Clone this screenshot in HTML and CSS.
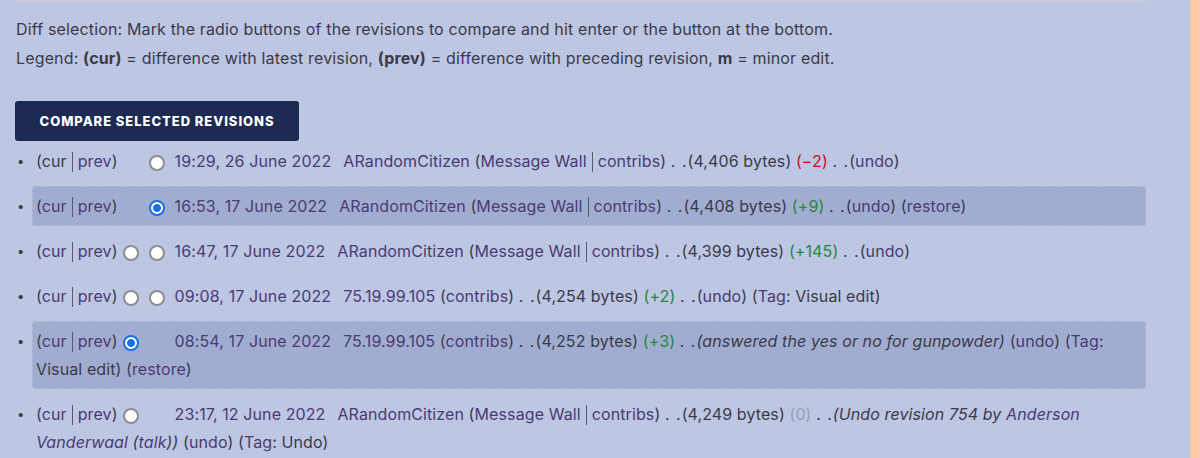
FILE: index.html
```html
<!DOCTYPE html>
<html>
<head>
<meta charset="utf-8">
<link rel="stylesheet" href="styles.css">
</head>
<body>
<div class="page">
  <div class="main">
    <div class="topline"></div>
    <p class="legend">Diff selection: Mark the radio buttons of the revisions to compare and hit enter or the button at the bottom.<br>Legend: <b>(cur)</b> = difference with latest revision, <b>(prev)</b> = difference with preceding revision, <b>m</b> = minor edit.</p>
    <button class="compare">COMPARE SELECTED REVISIONS</button>
    <ul class="history">
      <li class="row"><span class="bullet">•</span><div class="entry"><span class="curprev">(cur<span class="sep"></span><a>prev</a>)</span><span class="radio off hide"></span><span class="radio off"></span><a class="date">19:29, 26 June 2022</a><span class="user"><a>ARandomCitizen</a> (<a>Message Wall</a><span class="sep"></span><a>contribs</a>)</span> <span class="dots">. .</span>(4,406 bytes) <span class="neg">(−2)</span> <span class="dots">. .</span>(<a>undo</a>)</div></li>
      <li class="row"><span class="bullet">•</span><div class="entry sel"><span class="curprev">(<a>cur</a><span class="sep"></span><a>prev</a>)</span><span class="radio off hide"></span><span class="radio on"></span><a class="date">16:53, 17 June 2022</a><span class="user"><a>ARandomCitizen</a> (<a>Message Wall</a><span class="sep"></span><a>contribs</a>)</span> <span class="dots">. .</span>(4,408 bytes) <span class="pos">(+9)</span> <span class="dots">. .</span>(<a>undo</a>) (<a>restore</a>)</div></li>
      <li class="row"><span class="bullet">•</span><div class="entry"><span class="curprev">(<a>cur</a><span class="sep"></span><a>prev</a>)</span><span class="radio off"></span><span class="radio off"></span><a class="date">16:47, 17 June 2022</a><span class="user"><a>ARandomCitizen</a> (<a>Message Wall</a><span class="sep"></span><a>contribs</a>)</span> <span class="dots">. .</span>(4,399 bytes) <span class="pos">(+145)</span> <span class="dots">. .</span>(<a>undo</a>)</div></li>
      <li class="row"><span class="bullet">•</span><div class="entry"><span class="curprev">(<a>cur</a><span class="sep"></span><a>prev</a>)</span><span class="radio off"></span><span class="radio off"></span><a class="date">09:08, 17 June 2022</a><span class="user"><a>75.19.99.105</a> (<a>contribs</a>)</span> <span class="dots">. .</span>(4,254 bytes) <span class="pos">(+2)</span> <span class="dots">. .</span>(<a>undo</a>) (<a>Tag</a>: Visual edit)</div></li>
      <li class="row"><span class="bullet">•</span><div class="entry sel"><span class="curprev">(<a>cur</a><span class="sep"></span><a>prev</a>)</span><span class="radio on"></span><span class="radio off hide"></span><a class="date">08:54, 17 June 2022</a><span class="user"><a>75.19.99.105</a> (<a>contribs</a>)</span> <span class="dots">. .</span>(4,252 bytes) <span class="pos">(+3)</span> <span class="dots">. .</span><i>(answered the yes or no for gunpowder)</i> (<a>undo</a>) (<a>Tag</a>: Visual edit) (<a>restore</a>)</div></li>
      <li class="row"><span class="bullet">•</span><div class="entry"><span class="curprev">(<a>cur</a><span class="sep"></span><a>prev</a>)</span><span class="radio off"></span><span class="radio off hide"></span><a class="date">23:17, 12 June 2022</a><span class="user"><a>ARandomCitizen</a> (<a>Message Wall</a><span class="sep"></span><a>contribs</a>)</span> <span class="dots">. .</span>(4,249 bytes) <span class="zero">(0)</span> <span class="dots">. .</span><i>(Undo revision 754 by <a>Anderson Vanderwaal</a> (<a>talk</a>))</i> (<a>undo</a>) (<a>Tag</a>: Undo)</div></li>
    </ul>
  </div>
  <div class="side"></div>
</div>
</body>
</html>
```

FILE: styles.css
```css
html, body {
  margin: 0;
  padding: 0;
}
body {
  background: #bdc6e3;
  font-family: Inter, "Noto Sans", sans-serif;
  font-size: 16px;
  letter-spacing: 0.1px;
  color: #3a3a48;
}
.page {
  display: flex;
  height: 458px;
  overflow: hidden;
}
.main {
  flex: 1;
  padding: 0 44px 0 16px;
}
.side {
  width: 10px;
  flex: none;
  background: #fcc9a3;
}
.topline {
  height: 2px;
  background: #c9cbd8;
  margin-left: 1px;
}
.legend {
  margin: 13px 0 0 0;
  line-height: 29px;
  letter-spacing: 0.15px;
}
.legend b {
  font-weight: 700;
}
.compare {
  display: block;
  margin: 28px 0 0 -1px;
  width: 284px;
  height: 40px;
  background: #1d2a52;
  color: #fff;
  border: none;
  border-radius: 3px;
  font-family: Inter, "Noto Sans", sans-serif;
  font-weight: 800;
  font-size: 13px;
  letter-spacing: 0.95px;
  padding: 0;
}
.history {
  list-style: none;
  margin: 0;
  padding: 0;
}
.row {
  display: flex;
  margin-bottom: 5px;
}
.bullet {
  width: 16px;
  flex: none;
  line-height: 28px;
  padding-top: 6px;
  padding-left: 1px;
  box-sizing: border-box;
  font-size: 13px;
  color: #3a3a48;
}
.entry {
  flex: 1;
  line-height: 28px;
  padding: 5px 3px;
  border: 1px solid transparent;
  border-radius: 3px;
}
.entry.sel {
  background: #a1add0;
  border: 1px dashed #b3bbd6;
}
a {
  color: #4a3b73;
  text-decoration: none;
}
.curprev {
  color: #3a3a48;
}
.sep {
  display: inline-block;
  width: 1px;
  height: 20px;
  background: #5a5a66;
  margin: 0 5px;
  vertical-align: -5px;
}
.radio {
  display: inline-block;
  width: 16px;
  height: 16px;
  box-sizing: border-box;
  border-radius: 50%;
  background: #fff;
  vertical-align: -4px;
  margin-left: 5px;
}
.radio + .radio {
  margin-left: 10px;
  margin-right: 10px;
}
.radio.off {
  border: 2px solid #8d8d92;
}
.radio.on {
  border: 2px solid #1a6fe3;
  background: radial-gradient(circle, #1a6fe3 0 3.6px, #fff 4.2px);
}
.radio.hide {
  visibility: hidden;
}
.user {
  margin-left: 12px;
  color: #3a3a48;
}
.dots {
  letter-spacing: 1px;
}
.neg {
  color: #cf0a22;
}
.pos {
  color: #1e8a3a;
}
.zero {
  color: #9aa0b0;
}
i {
  font-style: italic;
}
```
